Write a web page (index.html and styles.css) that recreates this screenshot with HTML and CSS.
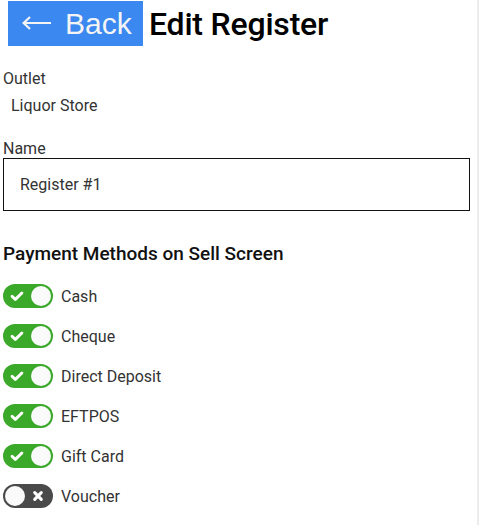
FILE: index.html
```html
<!DOCTYPE html>
<html>
<head>
<meta charset="utf-8">
<link rel="stylesheet" href="styles.css">
</head>
<body>
<div class="page">
  <h1 class="header">
    <button class="back"><svg class="arrow" viewBox="0 0 29 14" aria-label="←"><path d="M1.5 7 H29 M8 1 L1.5 7 L8 13" fill="none" stroke="#f4f4f4" stroke-width="2.2" stroke-linecap="butt" stroke-linejoin="miter"/></svg>Back</button>
    <span class="title">Edit Register</span>
  </h1>
  <div class="field">
    <div class="label">Outlet</div>
    <div class="value">Liquor Store</div>
  </div>
  <div class="field name-field">
    <div class="label">Name</div>
    <div class="input">Register #1</div>
  </div>
  <h2 class="section">Payment Methods on Sell Screen</h2>
  <ul class="methods">
    <li class="method"><span class="toggle on"><svg class="icon" viewBox="0 0 12 12"><path d="M1.8 6.3 L4.6 8.9 L10.2 3.4" fill="none" stroke="#fff" stroke-width="2.5" stroke-linecap="round" stroke-linejoin="round"/></svg><span class="knob"></span></span>Cash</li>
    <li class="method"><span class="toggle on"><svg class="icon" viewBox="0 0 12 12"><path d="M1.8 6.3 L4.6 8.9 L10.2 3.4" fill="none" stroke="#fff" stroke-width="2.5" stroke-linecap="round" stroke-linejoin="round"/></svg><span class="knob"></span></span>Cheque</li>
    <li class="method"><span class="toggle on"><svg class="icon" viewBox="0 0 12 12"><path d="M1.8 6.3 L4.6 8.9 L10.2 3.4" fill="none" stroke="#fff" stroke-width="2.5" stroke-linecap="round" stroke-linejoin="round"/></svg><span class="knob"></span></span>Direct Deposit</li>
    <li class="method"><span class="toggle on"><svg class="icon" viewBox="0 0 12 12"><path d="M1.8 6.3 L4.6 8.9 L10.2 3.4" fill="none" stroke="#fff" stroke-width="2.5" stroke-linecap="round" stroke-linejoin="round"/></svg><span class="knob"></span></span>EFTPOS</li>
    <li class="method"><span class="toggle on"><svg class="icon" viewBox="0 0 12 12"><path d="M1.8 6.3 L4.6 8.9 L10.2 3.4" fill="none" stroke="#fff" stroke-width="2.5" stroke-linecap="round" stroke-linejoin="round"/></svg><span class="knob"></span></span>Gift Card</li>
    <li class="method"><span class="toggle off"><span class="knob"></span><svg class="icon" viewBox="0 0 12 12"><path d="M3.2 3.2 L8.8 8.8 M8.8 3.2 L3.2 8.8" fill="none" stroke="#fff" stroke-width="2.7" stroke-linecap="round"/></svg></span>Voucher</li>
  </ul>
</div>
</body>
</html>
```

FILE: styles.css
```css
html {
  background: #fafafa;
}
body {
  margin: 0;
  font-family: Roboto, "Noto Sans", sans-serif;
  color: #222;
}
.page {
  width: 479px;
  min-height: 525px;
  box-sizing: border-box;
  padding: 1px 0 0 3px;
  background: #fff;
  border-right: 2px solid #ececec;
}
.header {
  display: flex;
  align-items: center;
  gap: 6px;
  margin: 0 0 0 5px;
  font-weight: 500;
}
.back {
  display: inline-flex;
  align-items: center;
  gap: 14px;
  width: 135px;
  height: 45px;
  box-sizing: border-box;
  padding: 0 0 0 14px;
  border: none;
  background: #3b88f0;
  color: #f4f4f4;
  font-family: "Liberation Sans", Arial, sans-serif;
  font-size: 30px;
  line-height: 45px;
}
.arrow {
  width: 29px;
  height: 14px;
  margin-top: -1px;
}
.title {
  font-size: 32px;
  font-weight: 500;
  color: #000;
  letter-spacing: -0.2px;
}
.field {
  margin-top: 23px;
}
.label {
  font-size: 16px;
  line-height: 19px;
  color: #333;
}
.value {
  margin-top: 8px;
  padding-left: 8px;
  font-size: 16px;
  line-height: 19px;
  color: #333;
}
.name-field {
  margin-top: 24px;
}
.input {
  width: 467px;
  height: 53px;
  box-sizing: border-box;
  border: 1px solid #111;
  padding-left: 16px;
  display: flex;
  align-items: center;
  font-size: 16px;
  color: #333;
}
.section {
  margin: 32px 0 0;
  font-size: 19px;
  line-height: 21px;
  font-weight: 500;
  color: #111;
}
.methods {
  list-style: none;
  margin: 20px 0 0;
  padding: 0;
  display: flex;
  flex-direction: column;
  gap: 16px;
}
.method {
  display: flex;
  align-items: center;
  gap: 8px;
  height: 24px;
  font-size: 16px;
  color: #333;
}
.toggle {
  width: 50px;
  height: 24px;
  box-sizing: border-box;
  border-radius: 12px;
  padding: 0 2px 0 7px;
  display: flex;
  align-items: center;
  justify-content: space-between;
}
.toggle.on {
  background: #3aa829;
}
.toggle.off {
  background: #4a4a4a;
  padding: 0 8px 0 2px;
}
.icon {
  width: 14px;
  height: 14px;
}
.knob {
  width: 20px;
  height: 20px;
  border-radius: 50%;
  background: #fafafa;
}
```
